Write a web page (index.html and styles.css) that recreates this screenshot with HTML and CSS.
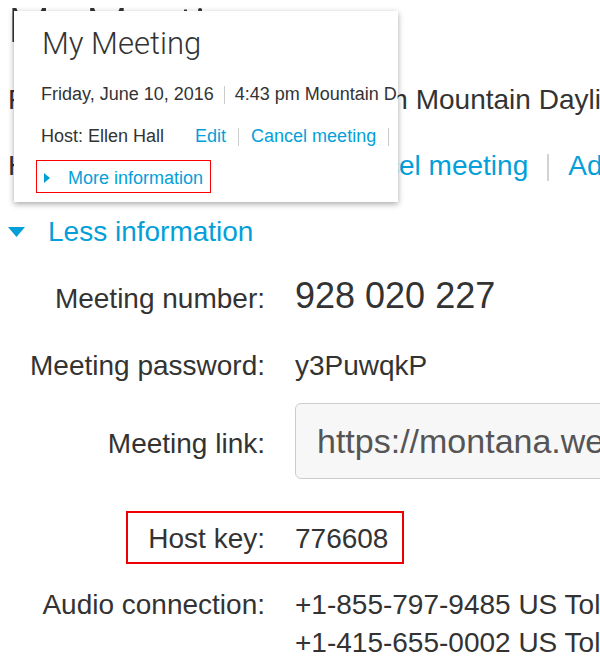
FILE: index.html
```html
<!DOCTYPE html>
<html lang="en">
<head>
<meta charset="utf-8">
<title>My Meeting</title>
<link rel="stylesheet" href="styles.css">
</head>
<body>
<div class="page">
  <h1 class="title">My Meeting</h1>
  <div class="line">Friday, June 10, 2016<span class="sep sep-date"></span>4:43 pm Mountain Daylight Time</div>
  <div class="line">Host: Ellen Hall<a class="link host-first">Edit</a><span class="sep"></span><a class="link">Cancel meeting</a><span class="sep"></span><a class="link">Add to calendar</a></div>
  <div class="line less">
    <svg class="tri-down" width="17" height="10" viewBox="0 0 17 10"><polygon points="0,0 17,0 8.5,10" fill="#049fd9"/></svg>
    <a class="link less-text">Less information</a>
  </div>

  <div class="details">
    <div class="row r-number">
      <div class="label">Meeting number:</div>
      <div class="value number">928 020 227</div>
    </div>
    <div class="row r-password">
      <div class="label">Meeting password:</div>
      <div class="value">y3PuwqkP</div>
    </div>
    <div class="row r-link">
      <div class="label label-link">Meeting link:</div>
      <div class="linkbox">https://montana.webex.com/montana/j.php?MTID=m1234</div>
    </div>
    <div class="row r-host">
      <div class="label">Host key:</div>
      <div class="value">776608</div>
      <div class="mark mark-host"></div>
    </div>
    <div class="row r-audio">
      <div class="label">Audio connection:</div>
      <div class="value audio">
        <div>+1-855-797-9485 US Toll free</div>
        <div>+1-415-655-0002 US Toll</div>
      </div>
    </div>
  </div>

  <div class="popup">
    <div class="p-title">My Meeting</div>
    <div class="p-line">Friday, June 10, 2016<span class="p-sep p-sep-date"></span>4:43 pm Mountain Daylight Time</div>
    <div class="p-line">Host: Ellen Hall<a class="p-link p-first">Edit</a><span class="p-sep"></span><a class="p-link">Cancel meeting</a><span class="p-sep"></span><a class="p-link">Add to calendar</a></div>
    <div class="p-line p-more">
      <svg class="tri-right" width="6" height="10" viewBox="0 0 6 10"><polygon points="0,0 6,5 0,10" fill="#049fd9"/></svg>
      <a class="p-link p-more-text">More information</a>
    </div>
    <div class="mark mark-more"></div>
  </div>
</div>
</body>
</html>
```

FILE: styles.css
```css
html, body {
  margin: 0;
  padding: 0;
  overflow: hidden;
  background: #fff;
}

body {
  width: 600px;
  height: 662px;
  font-family: "Liberation Sans", Arial, Helvetica, sans-serif;
  color: #333;
}

.page {
  position: relative;
  padding-left: 8px;
  white-space: nowrap;
}

.title {
  margin: 0 0 16px 0;
  font-family: Roboto, "Liberation Sans", Arial, sans-serif;
  font-weight: 300;
  font-size: 49px;
  line-height: 51px;
  color: #333;
}

.line {
  font-size: 28px;
  line-height: 66px;
  height: 66px;
}

.link {
  color: #049fd9;
  text-decoration: none;
}

.host-first {
  margin-left: 46px;
}

.sep {
  display: inline-block;
  width: 2px;
  height: 27px;
  background: #d3d3d3;
  margin: 0 19px;
  vertical-align: middle;
}

.sep-date {
  margin: 0 14px;
}

.less {
  display: flex;
  align-items: center;
}

.tri-down {
  display: block;
  flex: none;
}

.less-text {
  margin-left: 23px;
}

/* details */
.details {
  display: flex;
  flex-direction: column;
}

.row {
  display: flex;
  font-size: 28px;
  line-height: 40px;
}

.label {
  width: 257px;
  flex: none;
  text-align: right;
  margin-right: 30px;
}

.value {
  flex: none;
}

.r-number {
  align-items: baseline;
  padding-top: 11px;
  height: 40px;
}

.number {
  font-size: 36px;
}

.r-password {
  margin-top: 30px;
  height: 40px;
}

.r-link {
  margin-top: 17px;
  align-items: center;
}

.label-link {
  padding-top: 5px;
}

.linkbox {
  flex: none;
  box-sizing: border-box;
  width: 420px;
  height: 76px;
  border: 1px solid #cccccc;
  border-radius: 6px;
  background: #f7f7f7;
  padding-left: 21px;
  font-size: 34px;
  line-height: 74px;
  color: #555;
  overflow: hidden;
}

.r-host {
  position: relative;
  margin-top: 40px;
  height: 40px;
}

.r-audio {
  margin-top: 27px;
  line-height: 38px;
}

.mark {
  position: absolute;
  box-sizing: border-box;
  border: 2px solid #ee0000;
}

.mark-host {
  left: 118px;
  top: -8px;
  width: 278px;
  height: 53px;
}

/* popup */
.popup {
  position: absolute;
  left: 14px;
  top: 11px;
  width: 384px;
  height: 191px;
  box-sizing: border-box;
  padding: 4px 0 0 27px;
  background: #fff;
  box-shadow: 0 2px 6px rgba(0, 0, 0, 0.35);
  overflow: hidden;
}

.p-title {
  font-family: Roboto, "Liberation Sans", Arial, sans-serif;
  font-weight: 300;
  font-size: 31px;
  line-height: 58px;
  color: #333;
  padding-left: 1px;
}

.p-line {
  font-size: 18px;
  line-height: 42px;
  height: 42px;
}

.p-link {
  color: #049fd9;
  text-decoration: none;
}

.p-first {
  margin-left: 31px;
}

.p-sep {
  display: inline-block;
  width: 1px;
  height: 18px;
  background: #cccccc;
  margin: 0 12px;
  vertical-align: middle;
}

.p-sep-date {
  margin: 0 10px;
}

.p-more {
  display: flex;
  align-items: center;
}

.tri-right {
  display: block;
  flex: none;
  margin-left: 3px;
}

.p-more-text {
  margin-left: 18px;
}

.mark-more {
  left: 22px;
  top: 149px;
  width: 175px;
  height: 33px;
  border-width: 1px;
  border-color: #ff0000;
}
```
